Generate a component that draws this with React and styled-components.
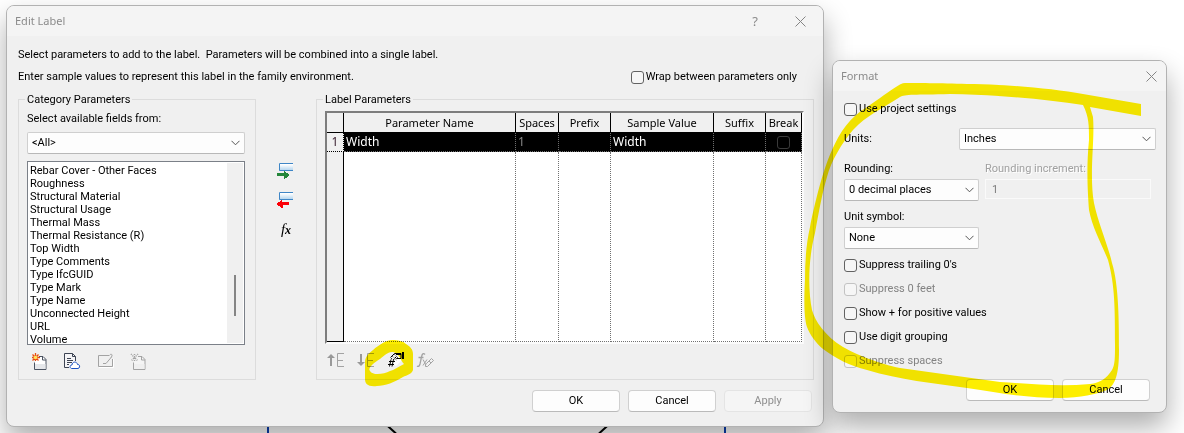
import React, { useState } from "react"
import styled, { createGlobalStyle } from "styled-components"

const fields = [
    "Rebar Cover - Other Faces",
    "Roughness",
    "Structural Material",
    "Structural Usage",
    "Thermal Mass",
    "Thermal Resistance (R)",
    "Top Width",
    "Type Comments",
    "Type IfcGUID",
    "Type Mark",
    "Type Name",
    "Unconnected Height",
    "URL",
    "Volume",
]

const options = [
    { name: "Suppress trailing 0's" },
    { name: "Suppress 0 feet", disabled: true },
    { name: "Show + for positive values" },
    { name: "Use digit grouping" },
    { name: "Suppress spaces", disabled: true },
]

function Dropdown({ id, value, label }) {
    return (
        <SelectWrap>
            <Select id={id} aria-label={label} defaultValue={value}>
                <option>{value}</option>
            </Select>
            <Chevron viewBox="0 0 9 6"><path d="M.5 .8 4.5 4.8 8.5 .8" /></Chevron>
        </SelectWrap>
    )
}

function Check({ children, disabled }) {
    return (
        <CheckLabel $disabled={disabled}>
            <Box type="checkbox" disabled={disabled} />
            {children}
        </CheckLabel>
    )
}

function CloseIcon() {
    return (
        <svg width="11" height="11" viewBox="0 0 11 11" fill="none" stroke="#858585">
            <path d="M.5 .5 10.5 10.5M10.5 .5 .5 10.5" />
        </svg>
    )
}

function MoveIcon({ remove }) {
    const id = remove ? "barRemove" : "barAdd"
    return (
        <svg width="18" height="18" viewBox="0 0 18 18">
            <defs>
                <linearGradient id={id} x1="0" y1="0" x2="0" y2="1">
                    <stop offset="0.2" stopColor="#fff" />
                    <stop offset="1" stopColor="#a9cfec" />
                </linearGradient>
            </defs>
            <rect x="2" y="1" width="14" height="8" fill={`url(#${id})`} />
            <path d="M16 1.5H2.5v7H16" fill="none" stroke="#3f86c6" />
            {remove
                ? <path d="M12 11v3H6v3H4v-1H3v-1H1v-1H0v-2h1v-1h2v-1h1V9h1v2z" fill="#fb0007" />
                : <path d="M0 11v3h7v3h1v-1h2v-1h1v-1h1v-2h-1v-1H9v-1H8V9H7v2z" fill="#24863a" />}
        </svg>
    )
}

function NewIcon({ off }) {
    return (
        <svg width="18" height="18" viewBox="0 0 18 18" fill="none">
            <path d="M8 3.5h4l3 3v10H3.500v-7" fill={off ? "#f4f4f4" : "#fff"} stroke={off ? "#a3a3a3" : "#4c5462"} />
            <path d="M4 11h10.500v5H4z" fill={off ? "#efefef" : "#e5e7ea"} />
            <path d="M11.500 3v4H15" stroke={off ? "#a3a3a3" : "#4c5462"} />
            {off
                ? <path d="M1 1l7 7M8 1 1 8M4.500 1v7" stroke="#a3a3a3" strokeDasharray="1 1" strokeWidth="1.500" />
                : <>
                    <path d="M4.500 0v8M1 4.500h8M1.500 1.500l6 6M7.500 1.500l-6 6" stroke="#e84c0e" strokeWidth="1.300" />
                    <circle cx="4.500" cy="4.500" r="1.800" fill="#ffe45a" />
                </>}
        </svg>
    )
}

function SharedIcon() {
    return (
        <svg width="18" height="18" viewBox="0 0 18 18" fill="none">
            <path d="M.5 .5h8l3 3v6l-5 5H.5z" fill="#f4f4f6" />
            <path d="M5 14.500H.5V.5h8l3 3V8" stroke="#3d4453" />
            <path d="M8.500 .5v3h3M3 5.500h4M3 7.500h6M3 9.500h5M3 11.500h2" stroke="#3d4453" />
            <path d="M7.500 15.500c-2-.5-2-3.500 .5-3.500 0-3.500 5-4 5.500-.5 2.500-.5 3 3.500 .5 4z" fill="#fff" stroke="#1a52c4" />
        </svg>
    )
}

function EditIcon() {
    return (
        <svg width="18" height="18" viewBox="0 0 18 18" fill="none" stroke="#a3a3a3">
            <path d="M2 14.500h14.500V6" stroke="#fff" />
            <path d="M12 2.500H1.500v11h14V6" />
            <path d="M6 10.500h3L14.500 4" />
            <path d="M12.500 2.500c1-2 3-1.500 2.500 .5l-1 1.500" />
        </svg>
    )
}

function SortIcon({ down }) {
    return (
        <svg width="18" height="18" viewBox="0 0 18 18" fill="none">
            {down
                ? <path d="M3 2h2v8h3l-4 4-4-4h3z" fill="#999" />
                : <path d="M3 14h2V6h3L4 2 0 6h3z" fill="#999" />}
            <path d="M17 1.500h-6.500v13H17M10.500 8.500H16" stroke="#a3a3a3" />
        </svg>
    )
}

function FormatIcon() {
    return (
        <svg width="18" height="18" viewBox="0 0 18 18" fill="none">
            <path d="M6 5h8v4l-5 5-5-3z" fill="#fff" />
            <path d="M2 9.500h6M1 12.500h6M4 7.500l-1.500 7M6.500 7.500l-1.500 7" stroke="#000" />
            <path d="M3.500 5.500l4-4H14v5H9.500L8 5" stroke="#000" />
            <path d="M4 6.500l4 1.500M5.500 4.500l4 3.500M7.500 2.500l4 4" stroke="#000" strokeDasharray="1 1" />
            <path d="M15 0h2v7h-2z" fill="#000" />
            <path d="M9 2.500h5" stroke="#000" />
        </svg>
    )
}

function FormulaEditIcon() {
    return (
        <svg width="20" height="18" viewBox="0 0 20 18" fill="none" stroke="#a3a3a3">
            <path d="M9 2.500C7.500 .5 6 2 5.500 5l-1.500 7c-.5 2-1.500 3-3 2M2.500 5.500h5" strokeWidth="1.300" />
            <path d="M7 7.500l3 5.500M11 7.500l-4 6" />
            <path d="M10.500 11.500l5-5 2 2-6 6h-2v-2zM13 9l2 2" />
        </svg>
    )
}

export default function App() {
    const [selected, setSelected] = useState(null)

    return (
        <>
            <Global />
            <Desktop>
                <Drawing width="1184" height="433">
                    <path d="M268 420v13M725 420v13" stroke="#0a3cb0" strokeWidth="2" />
                    <path d="M380 419l16 14.500M615 419l-16 14.500" stroke="#000" strokeWidth="2" />
                </Drawing>

                <EditWindow>
                    <TitleBar>
                        <h1>Edit Label</h1>
                        <TitleButton type="button" aria-label="Help">?</TitleButton>
                        <TitleButton type="button" aria-label="Close"><CloseIcon /></TitleButton>
                    </TitleBar>
                    <EditBody>
                        <Intro>Select parameters to add to the label.&nbsp; Parameters will be combined into a single label.</Intro>
                        <IntroRow>
                            <Intro>Enter sample values to represent this label in the family environment.</Intro>
                            <Check>Wrap between parameters only</Check>
                        </IntroRow>

                        <Groups>
                            <Group>
                                <legend>Category Parameters</legend>
                                <FieldLabel htmlFor="source">Select available fields from:</FieldLabel>
                                <Dropdown id="source" value="<All>" />
                                <ListFrame>
                                    <List role="listbox" aria-label="Available fields">
                                        {fields.map((a) => (
                                            <li key={a} role="option" aria-selected={selected === a} onClick={() => setSelected(a)}>{a}</li>
                                        ))}
                                    </List>
                                    <Track><Thumb /></Track>
                                </ListFrame>
                                <Tools>
                                    <IconButton type="button" aria-label="New parameter"><NewIcon /></IconButton>
                                    <IconButton type="button" aria-label="Shared parameters"><SharedIcon /></IconButton>
                                    <IconButton type="button" aria-label="Edit parameter" disabled><EditIcon /></IconButton>
                                    <IconButton type="button" aria-label="Delete parameter" disabled><NewIcon off /></IconButton>
                                </Tools>
                            </Group>

                            <Movers>
                                <IconButton type="button" aria-label="Add"><MoveIcon /></IconButton>
                                <IconButton type="button" aria-label="Remove"><MoveIcon remove /></IconButton>
                                <IconButton type="button" aria-label="Calculated value"><Formula>f<small>x</small></Formula></IconButton>
                            </Movers>

                            <Group $wide>
                                <legend>Label Parameters</legend>
                                <TableFrame>
                                    <Table>
                                        <colgroup>
                                            <Col $w={17} />
                                            <Col />
                                            <Col $w={43} />
                                            <Col $w={52} />
                                            <Col $w={103} />
                                            <Col $w={52} />
                                            <Col $w={36} />
                                        </colgroup>
                                        <thead>
                                            <tr>
                                                <th></th>
                                                <th>Parameter Name</th>
                                                <th>Spaces</th>
                                                <th>Prefix</th>
                                                <th>Sample Value</th>
                                                <th>Suffix</th>
                                                <th>Break</th>
                                            </tr>
                                        </thead>
                                        <tbody>
                                            <ActiveRow>
                                                <RowHead $active>1</RowHead>
                                                <td>Width</td>
                                                <Dim>1</Dim>
                                                <td></td>
                                                <td>Width</td>
                                                <td></td>
                                                <BreakCell><DarkBox type="checkbox" aria-label="Break" /></BreakCell>
                                            </ActiveRow>
                                            <EmptyRow>
                                                <RowHead />
                                                <td></td>
                                                <td></td>
                                                <td></td>
                                                <td></td>
                                                <td></td>
                                                <td></td>
                                            </EmptyRow>
                                        </tbody>
                                    </Table>
                                </TableFrame>
                                <Tools $tight>
                                    <IconButton type="button" aria-label="Move up" disabled><SortIcon /></IconButton>
                                    <IconButton type="button" aria-label="Move down" disabled><SortIcon down /></IconButton>
                                    <IconButton type="button" aria-label="Edit units format"><FormatIcon /></IconButton>
                                    <IconButton type="button" aria-label="Edit formula" disabled><FormulaEditIcon /></IconButton>
                                </Tools>
                            </Group>
                        </Groups>

                        <Actions>
                            <Button type="button">OK</Button>
                            <Button type="button">Cancel</Button>
                            <Button type="button" disabled>Apply</Button>
                        </Actions>
                    </EditBody>
                </EditWindow>

                <FormatWindow>
                    <TitleBar $flush>
                        <h1>Format</h1>
                        <TitleButton type="button" aria-label="Close"><CloseIcon /></TitleButton>
                    </TitleBar>
                    <FormatBody>
                        <Check>Use project settings</Check>
                        <UnitsRow>
                            <label htmlFor="units">Units:</label>
                            <Dropdown id="units" value="Inches" />
                        </UnitsRow>
                        <Pair>
                            <div>
                                <SmallLabel htmlFor="rounding">Rounding:</SmallLabel>
                                <Dropdown id="rounding" value="0 decimal places" />
                            </div>
                            <div>
                                <SmallLabel htmlFor="increment" $disabled>Rounding increment:</SmallLabel>
                                <Increment id="increment" defaultValue="1" disabled />
                            </div>
                        </Pair>
                        <Pair $close>
                            <div>
                                <SmallLabel htmlFor="symbol">Unit symbol:</SmallLabel>
                                <Dropdown id="symbol" value="None" />
                            </div>
                        </Pair>
                        <Checks>
                            {options.map((o) => <Check key={o.name} disabled={o.disabled}>{o.name}</Check>)}
                        </Checks>
                        <Actions $inset>
                            <Button type="button">OK</Button>
                            <Button type="button">Cancel</Button>
                        </Actions>
                    </FormatBody>
                </FormatWindow>

                <Marker width="1184" height="433">
                    <path d="M1141 104 1083 94C1050 88 1000 84 967 84 940 83 915 83 905 83 900 83 890 91 880 98L867 107C850 117 840 132 832 150 822 172 814 207 810 227 806 245 805 262 805 280 804 300 804 318 807 327 810 335 816 343 823 349 835 358 850 366 867 370 900 380 933 383 967 388 1000 393 1025 398 1060 398 1080 398 1097 394 1107 390 1115 385 1119 375 1119 350 1119 325 1119 285 1112 263 1108 245 1098 223 1094 203 1089 175 1095 140 1093 117L1090 107 1141 116z
                        M1083 105C1089 117 1089 125 1089 140 1086 170 1088 195 1089 210 1092 227 1102 245 1108 260 1115 285 1115 310 1115 345 1115 357 1115 365 1112 370 1107 378 1100 383 1090 384 1060 387 1030 384 1000 382L900 368C880 364 855 354 843 347 825 336 815 321 812 310 808 290 808 260 815 233 819 210 823 190 827 177 831 161 842 143 853 130 867 115 880 110 900 97 905 94 915 95 950 94 1000 95 1045 99 1083 105z" />
                    <path d="M373 350C380 344 387 340 392 340 398 340 403 341 406 344 411 347 413 350 413 354V370C412 374 407 375 403 377 395 382 385 386 377 386 368 387 365 384 365 379V362C365 357 369 353 373 350z
                        M370 371C367 368 375 362 380 359 385 355 388 352 392 352 398 351 401 361 404 364 398 367 394 370 390 371 384 374 373 376 370 371z" />
                </Marker>
            </Desktop>
        </>
    )
}

const Global = createGlobalStyle`
*{
    box-sizing: border-box;
}
body{
    margin: 0;
    background-color: white;
    color: black;
    font-family: Roboto, "Noto Sans", sans-serif;
    font-size: 11px;
    line-height: 16px;
}
button, input, select{
    font: inherit;
    color: inherit;
}
`
const Desktop = styled.main`
position: relative;
display: flex;
align-items: flex-start;
gap: 8px;
min-height: 100vh;
padding: 5px 17px 6px 6px;
overflow: hidden;
`
const Drawing = styled.svg`
position: absolute;
top: 0;
left: 0;
fill: none;
`
const Marker = styled.svg`
position: absolute;
top: 0;
left: 0;
fill: #fff000;
fill-rule: evenodd;
mix-blend-mode: multiply;
pointer-events: none;
`
const Window = styled.section`
position: relative;
background-color: #f0f0f0;
border: 1px solid #b2b2b2;
border-radius: 8px;
box-shadow: 0 14px 28px rgba(0, 0, 0, 0.32);
overflow: clip;
`
const EditWindow = styled(Window)`
flex: 1;
min-width: 0;
`
const FormatWindow = styled(Window)`
flex: 0 0 335px;
margin-top: 55px;
`
const TitleBar = styled.header`
display: flex;
align-items: center;
height: 30px;
padding: 0 ${(props) => (props.$flush ? "0" : "8px")} 0 8px;
background-color: #f4f4f4;
color: #8b8b8b;
font-family: "Noto Sans", sans-serif;
h1{
    flex: 1;
    margin: 0;
    font-size: 11px;
    font-weight: 400;
}
`
const TitleButton = styled.button`
display: flex;
align-items: center;
justify-content: center;
width: 30px;
height: 28px;
padding: 0;
border: none;
background: none;
font-size: 13px;
& + &{
    margin-left: 15px;
}
`
const EditBody = styled.div`
padding: 8px 9px 14px 11px;
`
const IntroRow = styled.div`
display: flex;
justify-content: space-between;
align-items: center;
padding-right: 17px;
`
const Intro = styled.p`
margin: 0;
line-height: 22px;
`
const CheckLabel = styled.label`
display: flex;
align-items: center;
gap: 2px;
line-height: 14px;
color: ${(props) => (props.$disabled ? "#838383" : "inherit")};
`
const Box = styled.input`
appearance: none;
width: 13px;
height: 13px;
margin: 0;
border: 1px solid #626262;
border-radius: 3px;
background-color: #f6f6f6;
&:checked{
    background-color: #0067c0;
}
&:disabled{
    border-color: #c3c3c3;
}
`
const DarkBox = styled(Box)`
display: block;
margin: auto;
border-color: #3a3a3a;
background-color: black;
`
const Groups = styled.div`
display: grid;
grid-template-columns: 238px 60px 1fr;
margin-top: 4px;
`
const Group = styled.fieldset`
min-width: 0;
margin: 0;
padding: ${(props) => (props.$wide ? "4px 9px 8px 8px" : "2px 10px 8px 8px")};
border: 1px solid #dcdcdc;
legend{
    margin-left: -2px;
    padding: 0 2px;
    line-height: 15px;
}
`
const FieldLabel = styled.label`
display: block;
margin-bottom: 3px;
line-height: 20px;
`
const SelectWrap = styled.div`
position: relative;
`
const Select = styled.select`
appearance: none;
display: block;
width: 100%;
height: 22px;
padding: 0 20px 0 4px;
border: 1px solid #cfcfcf;
border-bottom-color: #b8b8b8;
border-radius: 2px;
background-color: #fdfdfd;
`
const Chevron = styled.svg`
position: absolute;
right: 5px;
top: 8px;
width: 9px;
height: 6px;
fill: none;
stroke: #555555;
pointer-events: none;
`
const ListFrame = styled.div`
display: flex;
height: 184px;
margin-top: 7px;
padding: 1px;
border: 1px solid #7b8088;
background-color: white;
`
const List = styled.ul`
flex: 1;
margin: 0;
padding: 1px 1px 0;
list-style: none;
line-height: 13px;
li[aria-selected="true"]{
    background-color: #0078d7;
    color: white;
}
`
const Track = styled.div`
width: 16px;
padding: 112px 7px 0;
background-color: #f0f0f0;
`
const Thumb = styled.div`
height: 41px;
background-color: #858585;
`
const Tools = styled.div`
display: flex;
gap: ${(props) => (props.$tight ? "12px" : "15px")};
padding: ${(props) => (props.$tight ? "8px 2px 0" : "8px 4px 0")};
`
const IconButton = styled.button`
display: flex;
justify-content: center;
width: 18px;
height: 18px;
padding: 0;
border: none;
background: none;
svg{
    flex: none;
}
`
const Movers = styled.div`
display: flex;
flex-direction: column;
align-items: center;
gap: 11px;
padding-top: 70px;
`
const Formula = styled.span`
font-family: "Liberation Serif", serif;
font-style: italic;
font-size: 15px;
line-height: 18px;
small{
    font-size: 12px;
    font-weight: bold;
}
`
const TableFrame = styled.div`
border: 2px solid #7d7d7d;
border-right: 2px solid #fbfbfb;
border-bottom: 2px solid #fbfbfb;
background-color: white;
`
const Table = styled.table`
width: 100%;
table-layout: fixed;
border-spacing: 0;
font-family: "Noto Sans", sans-serif;
th{
    height: 20px;
    padding: 0;
    border-right: 1px solid black;
    border-bottom: 1px solid black;
    background-color: #f0f0f0;
    font-size: 11px;
    font-weight: 400;
    line-height: 16px;
    white-space: nowrap;
}
td{
    padding: 0 2px;
    border-right: 1px dotted #707070;
    border-bottom: 1px dotted #707070;
    font-size: 12px;
    line-height: 16px;
}
`
const Col = styled.col`
width: ${(props) => (props.$w ? props.$w + "px" : "auto")};
`
const ActiveRow = styled.tr`
height: 19px;
background-color: black;
color: white;
`
const EmptyRow = styled.tr`
height: 190px;
`
const RowHead = styled.td`
&&{
    border-right: 1px ${(props) => (props.$active ? "dotted" : "solid")} black;
    border-bottom: 1px ${(props) => (props.$active ? "dotted" : "solid")} black;
    background-color: #f0f0f0;
    color: #3a2030;
    text-align: center;
}
`
const Dim = styled.td`
color: #8a8a8a;
`
const BreakCell = styled.td`
text-align: center;
`
const Actions = styled.div`
display: flex;
justify-content: flex-end;
gap: 8px;
margin-top: ${(props) => (props.$inset ? "11px" : "10px")};
padding-right: ${(props) => (props.$inset ? "6px" : "2px")};
`
const Button = styled.button`
width: 88px;
height: 22px;
padding: 0;
border: 1px solid #d0d0d0;
border-bottom-color: #bababa;
border-radius: 4px;
background-color: #fdfdfd;
&:disabled{
    border-color: #e4e4e4;
    background-color: #f5f5f5;
    color: #8f8f8f;
}
`
const FormatBody = styled.div`
padding: 11px 10px 11px 11px;
`
const UnitsRow = styled.div`
display: grid;
grid-template-columns: 115px 1fr;
align-items: center;
margin-top: 12px;
`
const Pair = styled.div`
display: grid;
grid-template-columns: 135px 1fr;
gap: 6px;
margin-top: ${(props) => (props.$close ? "8px" : "11px")};
padding-right: 5px;
`
const SmallLabel = styled.label`
display: block;
margin-bottom: 2px;
color: ${(props) => (props.$disabled ? "#a0a0a0" : "inherit")};
text-shadow: ${(props) => (props.$disabled ? "1px 1px white" : "none")};
`
const Increment = styled.input`
width: 100%;
height: 20px;
padding: 0 6px;
border: 1px solid #fafafa;
background-color: #f0f0f0;
&:disabled{
    color: #7d7d7d;
}
`
const Checks = styled.div`
display: flex;
flex-direction: column;
align-items: flex-start;
gap: 10px;
margin-top: 9px;
`
